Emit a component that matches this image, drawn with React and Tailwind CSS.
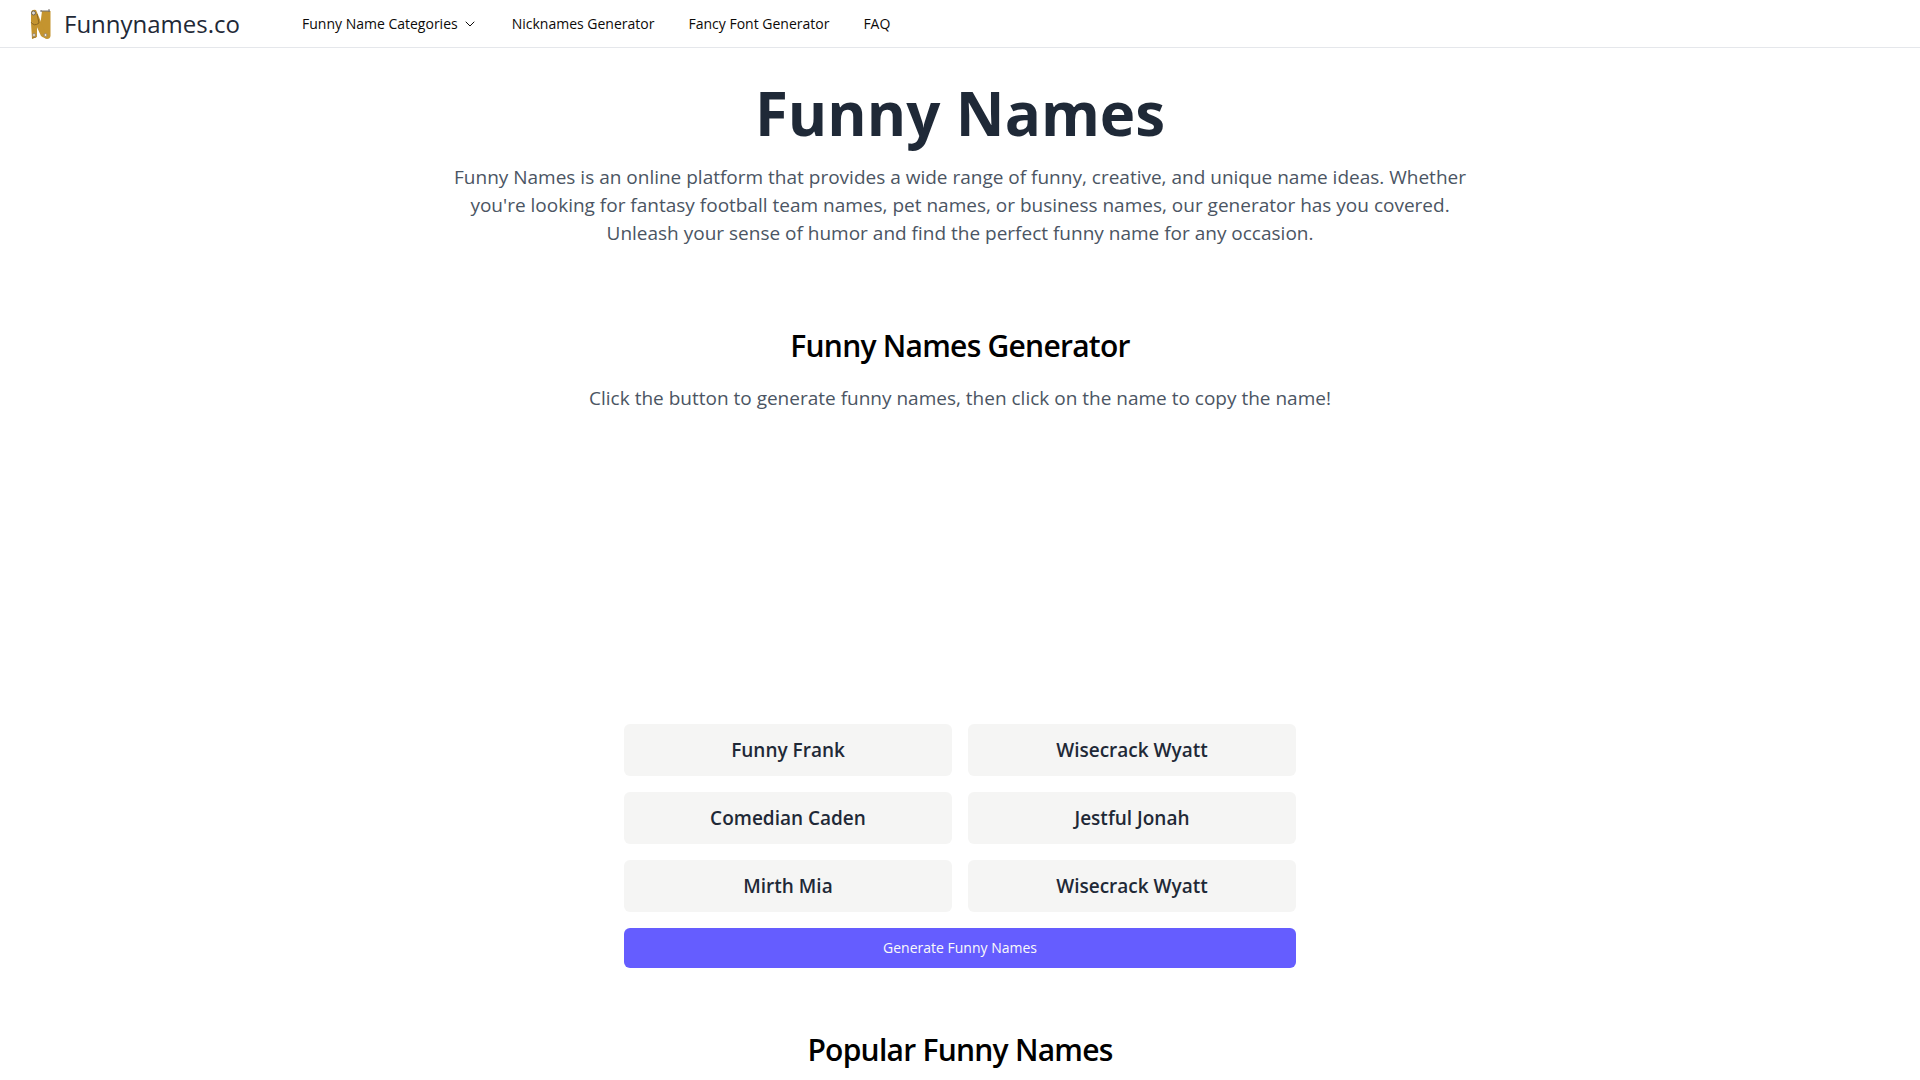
import React, { useState } from 'react';
import { ChevronDown } from 'lucide-react';

const navLinks = ['Nicknames Generator', 'Fancy Font Generator', 'FAQ'];

const namePool = [
  'Funny Frank',
  'Wisecrack Wyatt',
  'Comedian Caden',
  'Jestful Jonah',
  'Mirth Mia',
  'Wisecrack Wyatt',
];

const Logo = () => (
  <svg width="22" height="32" viewBox="0 0 22 32" aria-hidden="true">
    <path d="M12 3H20.500V28Q20 31 17 31Q14 31 12 26L10 19Z" fill="#c4942f" />
    <path d="M1 15H7V29L2 31Z" fill="#c4942f" />
    <path d="M1 4Q2 1 6 2L9 9L17 29Q14 31 11 28L6 17L1 14Z" fill="#c4942f" />
    <path d="M1 14Q4 19 9 15L7 6" fill="none" stroke="#8a6520" strokeWidth="1" />
    <path d="M11 3H20M11 2V4M19 1V4" stroke="#77706a" strokeWidth="1" />
    <path d="M2 30L6 29" fill="none" stroke="#a2782a" strokeWidth="1" />
    <circle cx="3.500" cy="5" r="2" fill="#ddd9d0" stroke="#6d655a" />
    <circle cx="4" cy="27" r="1.500" fill="#ece8df" stroke="#9d8a6a" />
    <circle cx="15.500" cy="27" r="1.500" fill="#ece8df" stroke="#9d8a6a" />
  </svg>
);

const Header = () => (
  <header className="flex h-12 items-center border-b border-[#e5e7eb] px-[30px]">
    <a href="#" className="flex items-center gap-3 text-2xl text-[#1f2937]">
      <Logo />
      Funnynames.co
    </a>
    <nav className="ml-[62px] flex items-center gap-[34px] text-sm text-[#0c0a09]">
      <button type="button" className="flex items-center gap-1">
        Funny Name Categories
        <ChevronDown size={16} strokeWidth={1.5} />
      </button>
      {navLinks.map((link) => (
        <a key={link} href="#">
          {link}
        </a>
      ))}
    </nav>
  </header>
);

const NameCard = ({ name }) => (
  <button
    type="button"
    className="h-13 rounded-md bg-[#f5f5f4] text-[19px] font-semibold text-[#1f2937]"
    onClick={() => navigator.clipboard.writeText(name)}
  >
    {name}
  </button>
);

const App = () => {
  const [names, setNames] = useState(namePool);

  const generateNames = () => {
    setNames([...names].sort(() => Math.random() - 0.5));
  };

  return (
    <div className="bg-white font-['Open_Sans',sans-serif]">
      <Header />
      <main className="flex flex-col items-center pt-[35px] text-center">
        <h1 className="text-6xl leading-15 font-bold text-[#1f2937]">Funny Names</h1>
        <p className="mt-5 max-w-5xl text-[19px] leading-7 text-[#4b5563]">
          Funny Names is an online platform that provides a wide range of funny, creative, and unique name ideas.
          Whether you're looking for fantasy football team names, pet names, or business names, our generator has you
          covered. Unleash your sense of humor and find the perfect funny name for any occasion.
        </p>

        <section className="mt-[81px] flex w-full flex-col items-center">
          <h2 className="text-3xl leading-9 font-semibold tracking-tight text-black">Funny Names Generator</h2>
          <p className="mt-5 text-[19px] leading-7 text-[#4b5563]">
            Click the button to generate funny names, then click on the name to copy the name!
          </p>
          <div className="mt-78 grid w-full max-w-2xl grid-cols-2 gap-4">
            {names.map((name, i) => (
              <NameCard key={i} name={name} />
            ))}
            <button
              type="button"
              className="col-span-2 h-10 rounded-md bg-[#655dff] text-sm text-[#fafaf9]"
              onClick={generateNames}
            >
              Generate Funny Names
            </button>
          </div>
        </section>

        <section className="mt-16">
          <h2 className="text-3xl leading-9 font-semibold tracking-tight text-black">Popular Funny Names</h2>
        </section>
      </main>
    </div>
  );
};

export default App;
